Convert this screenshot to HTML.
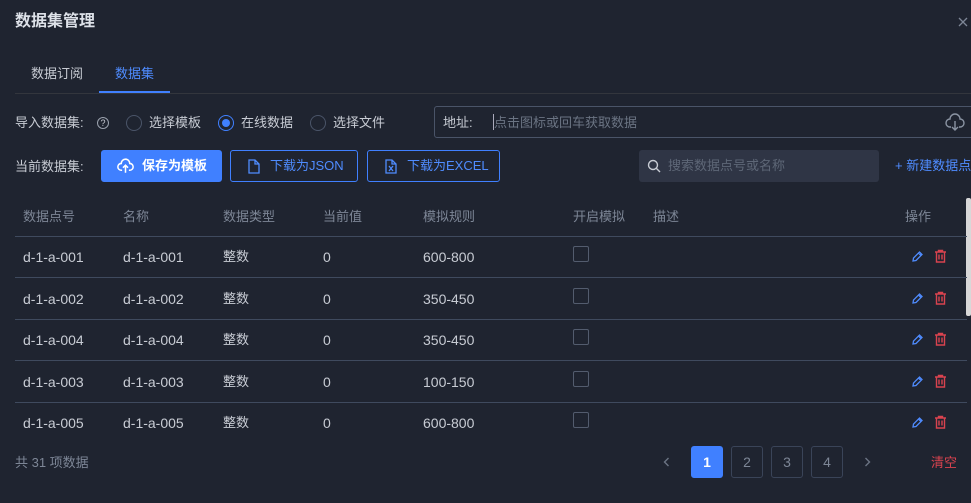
<!DOCTYPE html>
<html><head><meta charset="utf-8"><style>
*{box-sizing:border-box;margin:0;padding:0}
body{width:971px;height:503px;background:#1f2430;font-family:"Liberation Sans","Noto Sans CJK SC",sans-serif;color:#c8ccd4;font-size:13px;position:relative;overflow:hidden}
.a{position:absolute;white-space:nowrap;line-height:18px}
.hd{color:#7d8696}
.t{font-size:14px}
.line{position:absolute;left:15px;right:4px;height:1px;background:#3f4a5e}
.radio{position:absolute;width:16px;height:16px;border:1px solid #4a5468;border-radius:50%}
.btn{position:absolute;top:150px;height:32px;border:1px solid #4080ff;border-radius:3px;color:#4f8cff;font-size:13px;line-height:30px}
.btn span{line-height:30px}
.cb{position:absolute;left:573px;width:16px;height:16px;border:1px solid #535c6e;border-radius:2px}
.pg{position:absolute;top:446px;width:32px;height:32px;border:1px solid #3a4458;border-radius:3px;text-align:center;line-height:30px;color:#7d8696;font-size:14px}
</style></head><body>
<div class="a" style="left:15px;top:13px;font-size:16px;font-weight:bold;color:#dde1e8">数据集管理</div>
<svg class="a" style="left:958px;top:17px" width="10" height="10" viewBox="0 0 10 10" stroke="#7d8696" stroke-width="1.3"><path d="M1 1l8 8M9 1l-8 8"/></svg>
<div class="a" style="left:31px;top:65px;color:#c8ccd4">数据订阅</div>
<div class="a" style="left:115px;top:65px;color:#4f8cff">数据集</div>
<div style="position:absolute;left:15px;right:0;top:93px;height:1px;background:#33363d"></div>
<div style="position:absolute;left:99px;top:91px;width:71px;height:2px;background:#4080ff"></div>

<div class="a" style="left:15px;top:114px">导入数据集:</div>
<div class="a" style="left:97px;top:117px;width:12px;height:12px;border:1px solid #9aa1ad;border-radius:50%;font-size:9px;line-height:10px;text-align:center">?</div>
<div class="radio" style="left:126px;top:115px"></div><div class="a" style="left:149px;top:114px">选择模板</div>
<div class="radio" style="left:218px;top:115px;border-color:#4080ff"><div style="position:absolute;left:3px;top:3px;width:8px;height:8px;border-radius:50%;background:#4080ff"></div></div><div class="a" style="left:241px;top:114px">在线数据</div>
<div class="radio" style="left:310px;top:115px"></div><div class="a" style="left:333px;top:114px">选择文件</div>
<div style="position:absolute;left:434px;top:106px;width:545px;height:32px;border:1px solid #4a5468;border-radius:3px"></div>
<div class="a" style="left:443px;top:114px">地址:</div>
<div style="position:absolute;left:493px;top:114px;width:1px;height:16px;background:#aab"></div>
<div class="a" style="left:494px;top:114px;color:#6b7483">点击图标或回车获取数据</div>
<svg class="a" style="left:945px;top:112px" width="20" height="20" viewBox="0 0 20 20" fill="none" stroke="#8a93a2" stroke-width="1.4"><path d="M6 15H5a4 4 0 0 1 0-8 5 5 0 0 1 10 0 4 4 0 0 1 0 8h-1"/><path d="M10 9v9M7 15l3 3 3-3"/></svg>

<div class="a" style="left:15px;top:158px">当前数据集:</div>
<div class="btn" style="left:101px;width:121px;background:#4080ff;color:#fff;font-weight:bold">
<svg class="a" style="left:15px;top:7px" width="17" height="16" viewBox="0 0 20 18" fill="none" stroke="#fff" stroke-width="1.8"><path d="M6 14H5a4 4 0 0 1 0-8 5 5 0 0 1 10 0 4 4 0 0 1 0 8h-1"/><path d="M10 17V8M7 11l3-3 3 3"/></svg>
<span class="a" style="left:40px">保存为模板</span></div>
<div class="btn" style="left:230px;width:128px">
<svg class="a" style="left:17px;top:8px" width="12" height="15" viewBox="0 0 12 15" fill="none" stroke="#4f8cff" stroke-width="1.3"><path d="M1 1h6l4 4v9H1z M7 1v4h4"/></svg>
<span class="a" style="left:39px">下载为JSON</span></div>
<div class="btn" style="left:367px;width:133px">
<svg class="a" style="left:17px;top:8px" width="12" height="15" viewBox="0 0 12 15" fill="none" stroke="#4f8cff" stroke-width="1.3"><path d="M1 1h6l4 4v9H1z M7 1v4h4 M4 7l4 5M8 7l-4 5"/></svg>
<span class="a" style="left:39px">下载为EXCEL</span></div>
<div style="position:absolute;left:639px;top:150px;width:240px;height:32px;background:#2f3545;border-radius:3px"></div>
<svg class="a" style="left:647px;top:159px" width="14" height="14" viewBox="0 0 14 14" fill="none" stroke="#c8ccd4" stroke-width="1.4"><circle cx="6" cy="6" r="4.5"/><path d="M9.5 9.5L13 13"/></svg>
<div class="a" style="left:668px;top:157px;color:#5e6777">搜索数据点号或名称</div>
<div class="a" style="left:895px;top:157px;color:#4f8cff">+ 新建数据点</div>

<div class="a hd" style="left:23px;top:208px">数据点号</div>
<div class="a hd" style="left:123px;top:208px">名称</div>
<div class="a hd" style="left:223px;top:208px">数据类型</div>
<div class="a hd" style="left:323px;top:208px">当前值</div>
<div class="a hd" style="left:423px;top:208px">模拟规则</div>
<div class="a hd" style="left:573px;top:208px">开启模拟</div>
<div class="a hd" style="left:653px;top:208px">描述</div>
<div class="a hd" style="left:905px;top:208px">操作</div>
<div style="position:absolute;left:966px;top:198px;width:5px;height:118px;background:#d8d8d8;border-radius:2px"></div>

<div class="line" style="top:236px"></div>
<div class="line" style="top:277px"></div>
<div class="line" style="top:319px"></div>
<div class="line" style="top:360px"></div>
<div class="line" style="top:402px"></div>

<div id="rows"></div>
<script>
var d=[["d-1-a-001","600-800"],["d-1-a-002","350-450"],["d-1-a-004","350-450"],["d-1-a-003","100-150"],["d-1-a-005","600-800"]];
var ys=[248,290,331,373,414],h="";
d.forEach(function(r,i){var y=ys[i];
h+='<div class="a t" style="left:23px;top:'+y+'px">'+r[0]+'</div><div class="a t" style="left:123px;top:'+y+'px">'+r[0]+'</div><div class="a" style="left:223px;top:'+y+'px">整数</div><div class="a t" style="left:323px;top:'+y+'px">0</div><div class="a t" style="left:423px;top:'+y+'px">'+r[1]+'</div><div class="cb" style="top:'+(y-2)+'px"></div>';
h+='<svg class="a" style="left:911px;top:'+(y+2)+'px" width="13" height="13" viewBox="0 0 13 13" fill="none" stroke="#4f8cff" stroke-width="1.3"><path d="M2 11l0.5-3 6-6 2.5 2.5-6 6z M7.5 3l2.5 2.5"/></svg>';
h+='<svg class="a" style="left:934px;top:'+(y+1)+'px" width="13" height="14" viewBox="0 0 13 14" fill="none" stroke="#d9434f" stroke-width="1.4"><path d="M1 3h11M4.5 3V1.5h4V3M2.5 3v10h8V3M5 5.5v5M8 5.5v5"/></svg>';});
document.getElementById("rows").innerHTML=h;
</script>

<div class="a" style="left:15px;top:454px;color:#7d8696">共 31 项数据</div>
<svg class="a" style="left:663px;top:457px" width="7" height="10" viewBox="0 0 7 10" fill="none" stroke="#6b7483" stroke-width="1.4"><path d="M5.5 1L1.5 5l4 4"/></svg>
<div class="pg" style="left:691px;background:#4080ff;border-color:#4080ff;color:#fff;font-weight:bold">1</div>
<div class="pg" style="left:731px">2</div>
<div class="pg" style="left:771px">3</div>
<div class="pg" style="left:811px">4</div>
<svg class="a" style="left:864px;top:457px" width="7" height="10" viewBox="0 0 7 10" fill="none" stroke="#6b7483" stroke-width="1.4"><path d="M1.5 1l4 4-4 4"/></svg>
<div class="a" style="left:931px;top:454px;color:#d9434f">清空</div>
</body></html>
